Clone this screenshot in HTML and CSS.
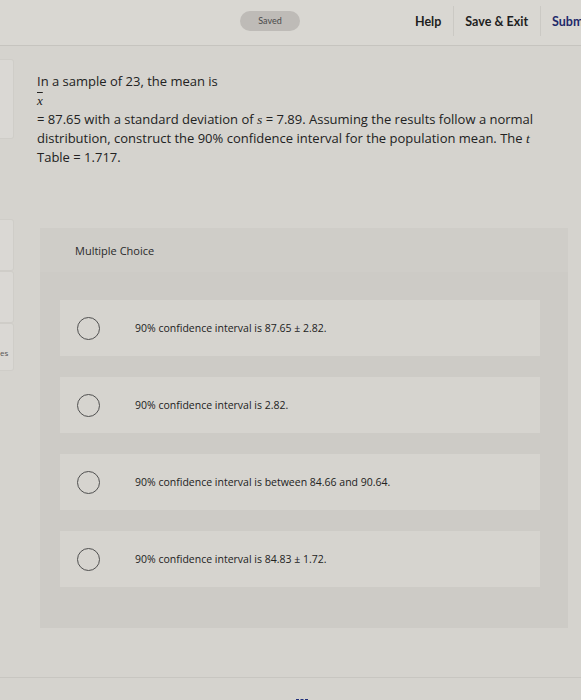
FILE: index.html
```html
<!DOCTYPE html>
<html>
<head>
<meta charset="utf-8">
<link rel="stylesheet" href="styles.css">
</head>
<body>
<header class="topbar">
  <div class="saved">Saved</div>
  <nav class="nav">
    <span class="nav-item">Help</span>
    <span class="nav-div"></span>
    <span class="nav-item">Save &amp; Exit</span>
    <span class="nav-div"></span>
    <span class="nav-item submit">Submit</span>
  </nav>
</header>
<div class="page">
  <aside class="side">
    <div class="side-card top"></div>
    <div class="side-group">
      <div class="side-card"></div>
      <div class="side-card"></div>
      <div class="side-card last">es</div>
    </div>
  </aside>
  <main class="content">
    <div class="question">
      In a sample of 23, the mean is<br>
      <span class="xbar">x</span><br>
      = 87.65 with a standard deviation of <i class="var">s</i> = 7.89. Assuming the results follow a normal<br>
      distribution, construct the 90% confidence interval for the population mean. The <i class="var">t</i><br>
      Table = 1.717.
    </div>
    <section class="mc">
      <div class="mc-head">Multiple Choice</div>
      <div class="mc-body">
        <div class="opt"><span class="radio"></span><span class="opt-text">90% confidence interval is 87.65 ± 2.82.</span></div>
        <div class="opt"><span class="radio"></span><span class="opt-text">90% confidence interval is 2.82.</span></div>
        <div class="opt"><span class="radio"></span><span class="opt-text">90% confidence interval is between 84.66 and 90.64.</span></div>
        <div class="opt"><span class="radio"></span><span class="opt-text">90% confidence interval is 84.83 ± 1.72.</span></div>
      </div>
    </section>
  </main>
</div>
<footer class="footer">
  <span class="prev">‹ Prev</span>
  <span class="count">1 of 15</span>
  <svg class="grid" width="12" height="10" viewBox="0 0 12 10"><rect x="0" y="0" width="3" height="10" fill="#1f2f7a"/><rect x="4.5" y="0" width="3" height="10" fill="#1f2f7a"/><rect x="9" y="0" width="3" height="10" fill="#1f2f7a"/></svg>
</footer>
</body>
</html>
```
FILE: styles.css
```css
* { box-sizing: border-box; }
html, body { margin: 0; padding: 0; }
body {
  width: 581px;
  height: 700px;
  overflow: hidden;
  background: #d5d3ce;
  font-family: "Open Sans", Lato, sans-serif;
  color: #222;
}
.topbar {
  height: 46px;
  display: flex;
  align-items: center;
  background: #d9d7d2;
  border-bottom: 1px solid #c6c4bf;
  overflow: hidden;
  white-space: nowrap;
  font-family: Lato, sans-serif;
}
.saved {
  flex-shrink: 0;
  margin-left: 240px;
  width: 60px;
  height: 20px;
  border-radius: 10px;
  background: #bebbb7;
  color: #4a4a4a;
  font-size: 9px;
  display: flex;
  align-items: center;
  justify-content: center;
  margin-top: -4px;
}
.nav {
  display: flex;
  align-items: center;
  margin-left: 115px;
  flex-shrink: 0;
  margin-top: -3px;
}
.nav-item {
  font-size: 12.5px;
  font-weight: 700;
  color: #1e1e1e;
}
.nav-div {
  width: 1px;
  height: 30px;
  background: #cbc9c4;
  margin: 0 11px 0 12px;
}
.submit { color: #1f2a6b; }
.page {
  display: flex;
  height: 625px;
}
.side {
  width: 14px;
  flex-shrink: 0;
  padding-top: 13px;
  display: flex;
  flex-direction: column;
}
.side-card {
  border: 1px solid #cfcdc8;
  border-left: none;
  border-radius: 0 3px 3px 0;
  background: #dad8d4;
  height: 52px;
}
.side-card.top { height: 80px; }
.side-group { margin-top: 80px; display: flex; flex-direction: column; }
.side-card.last {
  height: 48px;
  font-size: 8px;
  color: #555;
  display: flex;
  align-items: center;
  padding-top: 10px;
}
.content {
  flex: 1;
  padding-left: 23px;
  padding-top: 26px;
}
.question {
  font-size: 13px;
  line-height: 19px;
  color: #222;
  white-space: nowrap;
}
.xbar {
  font-family: "Liberation Serif", serif;
  font-style: italic;
  text-decoration: overline;
  font-size: 13px;
}
.var {
  font-family: "Liberation Serif", serif;
  font-size: 13.5px;
}
.mc {
  margin-top: 61px;
  margin-left: 3px;
  width: 528px;
  height: 400px;
  background: #cdcbc6;
}
.mc-head {
  height: 44px;
  padding-left: 35px;
  display: flex;
  align-items: center;
  font-size: 11px;
  color: #2a2a2a;
  background: #cfcdc8;
}
.mc-body {
  padding: 28px 28px 0 20px;
  display: flex;
  flex-direction: column;
  gap: 21px;
}
.opt {
  height: 56px;
  background: #d6d4cf;
  display: flex;
  align-items: center;
  padding-left: 17px;
}
.radio {
  width: 23px;
  height: 23px;
  border-radius: 50%;
  border: 1.3px solid #505050;
  flex-shrink: 0;
}
.opt-text {
  margin-left: 35px;
  font-size: 10.5px;
  color: #222;
}
.footer {
  height: 29px;
  border-top: 1px solid #c8c6c1;
  margin-top: 6px;
  display: flex;
  align-items: flex-end;
  padding-left: 172px;
  font-size: 12px;
  color: #333;
  gap: 28px;
  font-family: Lato, sans-serif;
}
.prev { position: relative; top: 6px; }
.count { position: relative; top: 6px; }
.grid { position: relative; top: 3px; }
```
